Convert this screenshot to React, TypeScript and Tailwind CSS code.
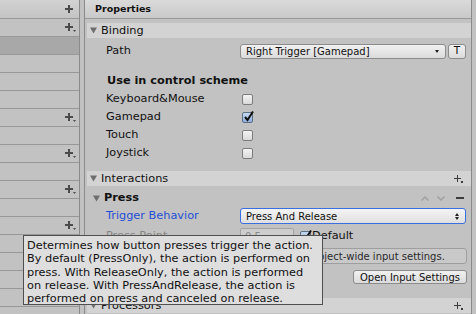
import React from 'react';

const leftRows: { plus?: 'plain' | 'menu'; selected?: boolean }[] = [
  { plus: 'plain' },
  { plus: 'menu' },
  { selected: true },
  {},
  {},
  {},
  { plus: 'menu' },
  {},
  { plus: 'menu' },
  {},
  { plus: 'menu' },
  {},
  { plus: 'menu' },
  {},
  {},
  {},
  {},
  {},
];

const schemes = [
  { name: 'Keyboard&Mouse', checked: false },
  { name: 'Gamepad', checked: true },
  { name: 'Touch', checked: false },
  { name: 'Joystick', checked: false },
];

const tooltipLines = [
  'Determines how button presses trigger the action.',
  'By default (PressOnly), the action is performed on',
  'press. With ReleaseOnly, the action is performed',
  'on release. With PressAndRelease, the action is',
  'performed on press and canceled on release.',
];

function PlusIcon({ menu = false, thin = false }: { menu?: boolean; thin?: boolean }) {
  if (thin) {
    return (
      <svg width="9" height="8" viewBox="0 0 9 8">
        <rect x="3" y="0" width="1" height="7" fill="#3c3c3c" />
        <rect x="0" y="3" width="7" height="1" fill="#3c3c3c" />
        {menu && <rect x="7" y="6" width="2" height="2" fill="#3c3c3c" />}
      </svg>
    );
  }
  return (
    <svg width="11" height="9" viewBox="0 0 11 9">
      <rect x="3" y="0" width="2" height="8" fill="#4a4a4a" />
      <rect x="0" y="3" width="8" height="2" fill="#4a4a4a" />
      {menu && <polygon points="8,7 11,7 9.5,9" fill="#4a4a4a" />}
    </svg>
  );
}

function Foldout() {
  return (
    <svg width="7" height="7" viewBox="0 0 7 7" className="shrink-0">
      <polygon points="0,0.5 7,0.5 3.5,6.5" fill="#6e6e6e" />
    </svg>
  );
}

function Checkbox({ checked = false }: { checked?: boolean }) {
  return (
    <div
      className={`relative w-[11px] h-[11px] rounded-[2px] border ${
        checked
          ? 'border-[#5f6f86] bg-gradient-to-b from-[#c6d8f0] to-[#8eb0de]'
          : 'border-[#7d7d7d] bg-gradient-to-b from-[#f3f3f3] to-[#d9d9d9]'
      }`}
    >
      {checked && (
        <svg width="12" height="12" viewBox="0 0 12 12" className="absolute left-[0px] top-[-3px]">
          <path d="M2 7 L4.5 10 L10 1.5" stroke="#111" strokeWidth="2" fill="none" />
        </svg>
      )}
    </div>
  );
}

function Band({ label, plus = false }: { label: string; plus?: boolean }) {
  return (
    <div className="ml-[2px] h-[15px] bg-[#d3d3d3] flex items-center pl-[3px] pr-[8px]">
      <Foldout />
      <span className="ml-[4px] text-[11.3px] leading-none">{label}</span>
      <div className="flex-1" />
      {plus && <PlusIcon thin menu />}
    </div>
  );
}

export default function App() {
  return (
    <div className="relative w-[476px] h-[314px] overflow-hidden bg-[#c2c2c2] flex font-['DejaVu_Sans',sans-serif] text-[#111]">
      {/* Left list */}
      <div className="w-[80px] shrink-0 border-r border-[#8a8a8a] flex flex-col">
        {leftRows.map((row, i) => (
          <div
            key={i}
            className={`${i === 0 ? 'h-[19px] bg-gradient-to-b from-[#d2d2d2] to-[#c4c4c4]' : 'h-[18px]'} ${
              row.selected ? 'bg-[#a8a8a8]' : ''
            } shrink-0 border-b border-[#989898] flex items-center justify-end pr-[3px]`}
          >
            {row.plus && <PlusIcon menu={row.plus === 'menu'} />}
          </div>
        ))}
      </div>

      <div className="w-[4px] shrink-0" />

      {/* Properties panel */}
      <div className="w-[388px] shrink-0 border-x border-[#8a8a8a] flex flex-col">
        <div className="h-[19px] shrink-0 border-b border-[#999999] bg-gradient-to-b from-[#dadada] to-[#c9c9c9] flex items-center pl-[10px]">
          <span className="text-[9.5px] font-bold">Properties</span>
        </div>

        <div className="mt-[4px]">
          <Band label="Binding" />
        </div>

        <div className="mt-[4px] h-[18px] flex items-center">
          <span className="ml-[21px] w-[134px] text-[11.3px]">Path</span>
          <div className="flex-1 h-[15px] flex items-center rounded-[3px] border border-[#8c8c8c] bg-gradient-to-b from-[#f1f1f1] to-[#dbdbdb] pl-[5px] pr-[6px] text-[10px]">
            <span className="flex-1">Right Trigger [Gamepad]</span>
            <svg width="4" height="3" viewBox="0 0 4 3">
              <polygon points="0,0 4,0 2,3" fill="#222" />
            </svg>
          </div>
          <div className="ml-[2px] mr-[5px] w-[18px] h-[15px] rounded-[3px] border border-[#8c8c8c] bg-gradient-to-b from-[#f1f1f1] to-[#dbdbdb] flex items-center justify-center text-[10.5px]">
            T
          </div>
        </div>

        <div className="mt-[12px] h-[18px] flex items-center">
          <span className="ml-[22px] text-[11.3px] font-bold">Use in control scheme</span>
        </div>

        {schemes.map((s) => (
          <div key={s.name} className="h-[18px] flex items-center">
            <span className="ml-[21px] w-[134px] text-[11.3px]">{s.name}</span>
            <div className="ml-[2px]">
              <Checkbox checked={s.checked} />
            </div>
          </div>
        ))}

        <div className="mt-[9px]">
          <Band label="Interactions" plus />
        </div>

        <div className="mt-[3px] h-[18px] flex items-center pl-[8px] pr-[7px]">
          <Foldout />
          <span className="ml-[4px] text-[11.3px] font-bold">Press</span>
          <div className="flex-1" />
          <svg width="8" height="5" viewBox="0 0 8 5">
            <path d="M0.5 4.5 L4 1 L7.5 4.5" stroke="#a0a0a0" strokeWidth="1.5" fill="none" />
          </svg>
          <svg width="8" height="5" viewBox="0 0 8 5" className="ml-[8px]">
            <path d="M0.5 0.5 L4 4 L7.5 0.5" stroke="#a0a0a0" strokeWidth="1.5" fill="none" />
          </svg>
          <div className="ml-[11px] w-[8px] h-[2px] bg-[#3c3c3c]" />
        </div>

        <div className="h-[18px] flex items-center">
          <span className="ml-[21px] w-[134px] text-[11.3px] text-[#1f4fd6]">Trigger Behavior</span>
          <div className="flex-1 mr-[5px] h-[16px] flex items-center rounded-[3px] border border-[#3b6ee0] bg-gradient-to-b from-[#f4f4f4] to-[#e0e0e0] pl-[5px] pr-[6px] text-[10px]">
            <span className="flex-1">Press And Release</span>
            <svg width="4" height="7" viewBox="0 0 4 7">
              <polygon points="0,3 4,3 2,0" fill="#222" />
              <polygon points="0,4 4,4 2,7" fill="#222" />
            </svg>
          </div>
        </div>

        <div className="mt-[2px] h-[18px] flex items-center">
          <span className="ml-[21px] w-[134px] text-[11.3px] text-[#858585]">Press Point</span>
          <div className="w-[54px] h-[16px] rounded-[2px] border border-[#a3a3a3] bg-[#cdcdcd] flex items-center pl-[4px] text-[10px] text-[#8a8a8a]">
            0.5
          </div>
          <div className="ml-[6px]">
            <Checkbox checked />
          </div>
          <span className="ml-[1px] text-[11.3px]">Default</span>
        </div>

        <div className="mt-[3px] ml-[19px] mr-[4px] h-[16px] rounded-[3px] border border-[#9e9e9e] bg-[#c9c9c9] flex items-center pl-[2px] text-[10px] text-[#2a2a2a] whitespace-nowrap overflow-hidden">
          Uses "Default Button Press Point" set in project-wide input settings.
        </div>

        <div className="mt-[6px] mr-[4px] self-end w-[114px] h-[14px] rounded-[3px] border border-[#8c8c8c] bg-gradient-to-b from-[#f1f1f1] to-[#dbdbdb] flex items-center justify-center text-[10px]">
          Open Input Settings
        </div>

        <div className="mt-[14px]">
          <Band label="Processors" plus />
        </div>
      </div>

      {/* Tooltip */}
      <div className="absolute left-[23px] top-[235px] w-[300px] h-[70px] border border-[#505050] bg-[#dedede] pl-[3px] pt-[3px] text-[11.3px] leading-[13.33px] text-[#111]">
        {tooltipLines.map((line) => (
          <div key={line} className="whitespace-nowrap">
            {line}
          </div>
        ))}
      </div>
    </div>
  );
}
